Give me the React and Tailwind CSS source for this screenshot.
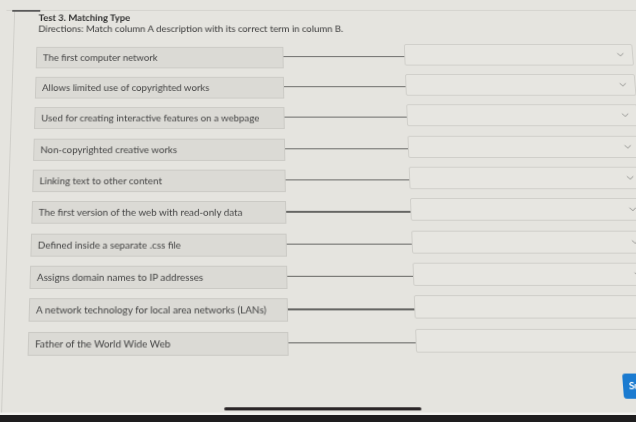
import React from "react";

const items = [
  "The first computer network",
  "Allows limited use of copyrighted works",
  "Used for creating interactive features on a webpage",
  "Non-copyrighted creative works",
  "Linking text to other content",
  "The first version of the web with read-only data",
  "Defined inside a separate .css file",
  "Assigns domain names to IP addresses",
  "A network technology for local area networks (LANs)",
  "Father of the World Wide Web",
];

function Chevron() {
  return (
    <svg width="8" height="5" viewBox="0 0 8 5" className="shrink-0">
      <path d="M0.8 0.8 L4 3.8 L7.2 0.8" fill="none" stroke="#8e8e8c" strokeWidth="0.9" />
    </svg>
  );
}

function Row({ text }) {
  return (
    <div className="flex items-start h-[23px]">
      <div className="w-[254px] h-[23px] shrink-0 bg-[#dbdad5] border border-[#cbcac5] flex items-center pl-[6px] text-[9.8px] text-[#444444] whitespace-nowrap">
        {text}
      </div>
      <div className="w-[123.5px] shrink-0 mt-[10px] h-[1.3px] bg-[#666664]" />
      <div className="w-[235px] h-[23px] shrink-0 -mt-[3px] bg-[#e7e6e1] border border-[#d0cfca] rounded-[2px] flex items-center justify-end pr-[8px]">
        <Chevron />
      </div>
    </div>
  );
}

export default function App() {
  return (
    <div
      className="w-[636px] h-[422px] overflow-hidden bg-[#1e1d1e]"
      style={{ fontFamily: "Lato, 'Open Sans', Arial, sans-serif" }}
    >
      <div className="w-[720px] h-[450px] -ml-[30px] -mt-[40px] bg-[#e5e4df] border-b-2 border-[#f1f1ee] origin-[220px_240px] [transform:perspective(1000px)_rotateX(10.2deg)] flex flex-col pt-[40px] pl-[30px]">
        <div className="relative flex flex-col h-[408px] border-t border-[#d3d2cd]">
          <div className="absolute left-[6px] -top-[1.5px] w-[29px] h-[2px] bg-[#5a5a5a]" />
          <div className="flex flex-1">
            <div className="w-[9px] shrink-0 border-r border-[#d0cfca]" />
            <div className="flex flex-col pl-[23px]">
              <div className="pl-[1.5px] pt-[1px] text-[9.8px] leading-[12.4px] text-[#2f2f2f]">
                <div className="font-bold">Test 3. Matching Type</div>
                <div className="text-[#3a3a3a]">Directions: Match column A description with its correct term in column B.</div>
              </div>
              <div className="flex flex-col gap-[9.35px] mt-[12.7px]">
                {items.map((t) => (
                  <Row key={t} text={t} />
                ))}
              </div>
              <div className="flex justify-end mt-[17px] w-[620px]">
                <div className="h-[24px] px-[6px] bg-[#1b7bd0] rounded-[3px] text-white text-[10px] font-bold flex items-center">
                  Submit
                </div>
              </div>
              <div className="flex mt-[8px]">
                <div className="ml-[191px] w-[190px] h-[3px] bg-[#2b2628] rounded-full" />
              </div>
            </div>
          </div>
        </div>
      </div>
    </div>
  );
}
